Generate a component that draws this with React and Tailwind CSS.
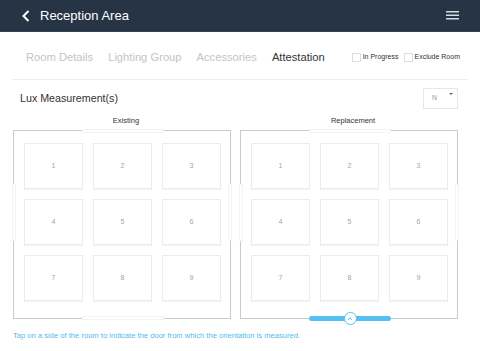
const tabs = ["Room Details", "Lighting Group", "Accessories", "Attestation"];
const cells = [1, 2, 3, 4, 5, 6, 7, 8, 9];

function Door({ side }) {
  const pos = {
    top: "top-[-2px] left-[68px] w-[82px] h-[4px]",
    bottom: "bottom-[-2px] left-[68px] w-[82px] h-[4px]",
    left: "left-[-2px] top-[53px] w-[4px] h-[57px]",
    right: "right-[-2px] top-[53px] w-[4px] h-[57px]",
  }[side];
  return <div className={`absolute ${pos} bg-white border border-[#f3f3f3]`} />;
}

function SelectedDoor() {
  return (
    <div className="absolute bottom-[-3px] left-[68px] w-[82px] h-[5px] rounded-full bg-[#55c1f2] flex items-center justify-center">
      <div className="w-[13px] h-[13px] rounded-full bg-white border-[1.5px] border-[#55c1f2] flex items-center justify-center">
        <svg width="6" height="4" viewBox="0 0 6 4">
          <polyline points="1,3 3,1 5,3" fill="none" stroke="#55c1f2" strokeWidth="1" />
        </svg>
      </div>
    </div>
  );
}

function Room({ label, selected }) {
  return (
    <div className="w-[218px] flex flex-col">
      <div className="h-[10px] pl-[8px] flex items-center justify-center text-[7.5px] text-[#333]">
        {label}
      </div>
      <div className="relative mt-[4px] border border-[#cbcbcb] pt-[12px] pb-[17px] pl-[10px] pr-[9px]">
        <div className="grid grid-cols-3 gap-x-[10px] gap-y-[10px]">
          {cells.map((n) => (
            <div
              key={n}
              className="h-[46px] border border-[#ececec] shadow-[0_1px_1px_rgba(0,0,0,0.04)] flex items-center justify-center text-[7px] text-[#a5a5a5]"
            >
              {n}
            </div>
          ))}
        </div>
        <Door side="top" />
        <Door side="left" />
        <Door side="right" />
        {selected ? <SelectedDoor /> : <Door side="bottom" />}
      </div>
    </div>
  );
}

export default function App() {
  return (
    <div className="w-[480px] h-[351px] bg-white overflow-hidden font-['Liberation_Sans',Arial,sans-serif]">
      <header className="h-[32px] bg-[#263446] border-b border-[#34455a] flex items-center justify-between pl-[21px] pr-[21px]">
        <div className="flex items-center">
          <svg width="10" height="12" viewBox="0 0 10 12">
            <polyline points="7.5,1 2.5,6 7.5,11" fill="none" stroke="#fff" strokeWidth="2" />
          </svg>
          <span className="ml-[9px] text-[13px] text-white">Reception Area</span>
        </div>
        <svg width="13" height="9" viewBox="0 0 13 9">
          <rect x="0" y="0" width="13" height="1.5" fill="#d3dae2" />
          <rect x="0" y="3.5" width="13" height="1.5" fill="#d3dae2" />
          <rect x="0" y="7" width="13" height="1.5" fill="#d3dae2" />
        </svg>
      </header>

      <div className="mt-[14px] h-[22px] flex items-center pl-[26px]">
        <div className="flex items-center gap-[15px] text-[11.2px]">
          {tabs.map((t) => (
            <span key={t} className={t === "Attestation" ? "text-[#333]" : "text-[#c4c4c4]"}>
              {t}
            </span>
          ))}
        </div>
        <div className="ml-auto mr-[20px] flex items-center text-[7px] text-[#333]">
          <span className="w-[9px] h-[9px] border border-[#dedede]" />
          <span className="ml-[2px]">In Progress</span>
          <span className="ml-[6px] w-[9px] h-[9px] border border-[#dedede]" />
          <span className="ml-[1px]">Exclude Room</span>
        </div>
      </div>

      <div className="mt-[11px] mx-[13px] h-px bg-[#ececec]" />

      <div className="pl-[13px] w-[458px]">
        <div className="mt-[8px] h-[21px] flex items-center justify-between">
          <span className="pl-[7px] text-[10.7px] text-[#333]">Lux Measurement(s)</span>
          <div className="w-[35px] h-[21px] border border-[#e6e6e6] relative flex items-center pl-[8px] text-[7px] text-[#999]">
            N
            <span className="absolute right-[4px] top-[4px] w-0 h-0 border-l-[2px] border-r-[2px] border-t-[2.5px] border-l-transparent border-r-transparent border-t-[#666]" />
          </div>
        </div>

        <div className="mt-[7px] flex gap-[9px]">
          <Room label="Existing" />
          <Room label="Replacement" selected />
        </div>

        <p className="mt-[12px] h-[10px] flex items-center text-[7.6px] text-[#4fbaf0]">
          Tap on a side of the room to indicate the door from which the orientation is measured.
        </p>
      </div>
    </div>
  );
}
